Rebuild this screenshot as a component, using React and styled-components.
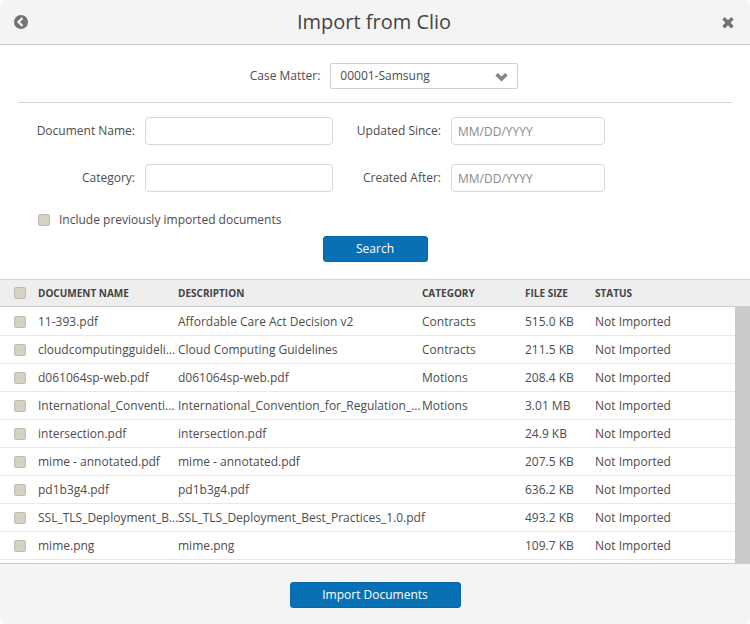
import React, {useState} from 'react';
import styled, {createGlobalStyle} from 'styled-components';

const GlobalStyle = createGlobalStyle`
 * {
     box-sizing: border-box;
 }

 body {
     margin: 0;
     background: #FFFFFF;
 }

 body, button, input, select {
     font-family: "Open Sans", "Noto Sans", sans-serif;
     font-size: 12px;
     line-height: 16px;
     color: #4D4D4D;
 }
`

const Dialog = styled.div`
 background: #FFFFFF;
 border-radius: 6px;
 overflow: hidden;
`

const Header = styled.header`
 background: #F4F4F4;
 border-bottom: 1px solid #CCCCCC;
 height: 45px;
 padding: 0 14px;
 display: flex;
 align-items: center;
 justify-content: space-between;

 & h1 {
     margin: 0;
     font-weight: 400;
     font-size: 20px;
     line-height: 28px;
     color: #444444;
 }
`

const IconButton = styled.button`
 display: flex;
 padding: 0;
 border: 0;
 background: none;
 cursor: pointer;
`

const MatterBar = styled.div`
 margin: 0 18px;
 padding: 18px 0 13px 18px;
 border-bottom: 1px solid #D3D3D3;
 display: flex;
 align-items: center;
 justify-content: center;
 gap: 10px;
`

const SelectWrap = styled.div`
 position: relative;
 width: 188px;

 & select {
     display: block;
     appearance: none;
     width: 100%;
     height: 26px;
     padding: 0 30px 0 9px;
     border: 1px solid #CFCFCF;
     border-radius: 2px;
     background: #FFFFFF;
 }

 & svg {
     position: absolute;
     right: 10px;
     top: 9px;
     pointer-events: none;
 }
`

const Filters = styled.form`
 padding: 14px 0 17px;
`

const Fields = styled.div`
 display: grid;
 grid-template-columns: 118px 188fr 98px 154fr;
 align-items: center;
 gap: 19px 10px;
 padding: 0 145px 0 17px;

 & label {
     text-align: right;
     white-space: nowrap;
 }
`

const TextInput = styled.input`
 width: 100%;
 height: 28px;
 padding: 0 6px;
 border: 1px solid #D6D6D6;
 border-radius: 4px;
 background: #FFFFFF;

 &::placeholder {
     color: #8A8A8A;
     opacity: 1;
 }
`

const Checkbox = styled.input.attrs({type: 'checkbox'})`
 appearance: none;
 flex: none;
 display: block;
 width: 12px;
 height: 12px;
 margin: 0;
 border: 1px solid #C0BDAF;
 border-radius: 2px;
 background: #D5D1C3;

 &:checked {
     background: #8C8A7E;
 }
`

const IncludeRow = styled.div`
 display: flex;
 align-items: center;
 gap: 9px;
 margin: 20px 0 8px;
 padding-left: 38px;
`

const Button = styled.button`
 display: block;
 width: ${({$wide}) => $wide ? '171px' : '105px'};
 height: 26px;
 margin: 0 auto;
 padding: 0;
 border: 1px solid #0868A8;
 border-radius: 3px;
 background: #0871B5;
 font-weight: 500;
 color: #FFFFFF;
 cursor: pointer;
`

const DocumentTable = styled.table`
 display: block;
 border-top: 1px solid #D3D3D3;
 border-bottom: 1px solid #CCCCCC;

 & tr {
     display: grid;
     grid-template-columns: 24px 140fr 244fr 103fr 70fr 140fr;
     align-items: center;
     padding-left: 14px;
 }

 & th, & td {
     min-width: 0;
     padding: 0;
     text-align: left;
     white-space: nowrap;
 }

 & thead {
     display: block;
     padding-right: 15px;
     background: #EEEEEE;
     border-bottom: 1px solid #D0D0D0;
 }

 & thead tr {
     height: 26px;
 }

 & th {
     font-weight: 700;
     font-size: 10px;
     color: #444444;
 }

 & tbody {
     display: block;
     padding: 1px 0 3px;
     border-right: 15px solid #CACACA;
 }

 & tbody tr {
     height: 28px;
     border-bottom: 1px solid #E8E8E8;
 }
`

const Footer = styled.footer`
 background: #F4F4F4;
 padding: 18px 0 16px;
`

const columns = ['DOCUMENT NAME', 'DESCRIPTION', 'CATEGORY', 'FILE SIZE', 'STATUS']

const documents = [
  {name: '11-393.pdf', description: 'Affordable Care Act Decision v2', category: 'Contracts', size: '515.0 KB'},
  {name: 'cloudcomputingguideli...', description: 'Cloud Computing Guidelines', category: 'Contracts', size: '211.5 KB'},
  {name: 'd061064sp-web.pdf', description: 'd061064sp-web.pdf', category: 'Motions', size: '208.4 KB'},
  {name: 'International_Conventi...', description: 'International_Convention_for_Regulation_...', category: 'Motions', size: '3.01 MB'},
  {name: 'intersection.pdf', description: 'intersection.pdf', category: '', size: '24.9 KB'},
  {name: 'mime - annotated.pdf', description: 'mime - annotated.pdf', category: '', size: '207.5 KB'},
  {name: 'pd1b3g4.pdf', description: 'pd1b3g4.pdf', category: '', size: '636.2 KB'},
  {name: 'SSL_TLS_Deployment_B...', description: 'SSL_TLS_Deployment_Best_Practices_1.0.pdf', category: '', size: '493.2 KB'},
  {name: 'mime.png', description: 'mime.png', category: '', size: '109.7 KB'},
]

const BackIcon = () => (
  <svg width="14" height="14" viewBox="0 0 14 14" aria-hidden="true">
    <circle cx="7" cy="7" r="7" fill="#737373"/>
    <path d="M8.5 2.9L4.5 7l4 4.1" fill="none" stroke="#F4F4F4" strokeWidth="2.2"/>
  </svg>
)

const CloseIcon = () => (
  <svg width="16" height="14" viewBox="0 0 16 14" aria-hidden="true">
    <path d="M4.8 4.5l6.4 6.4M11.2 4.5l-6.4 6.4" stroke="#737373" strokeWidth="3.6" strokeLinecap="square"/>
  </svg>
)

const ArrowIcon = () => (
  <svg width="13" height="10" viewBox="0 0 13 10" aria-hidden="true">
    <path d="M1.6 2.2l4.9 4.8 4.9-4.8" fill="none" stroke="#85857B" strokeWidth="3.6"/>
  </svg>
)

const App = () => {
  const [selected, setSelected] = useState([])

  const toggle = (name) => {
      setSelected(selected.includes(name) ? selected.filter(item => item !== name) : [...selected, name])
  }

  const toggleAll = () => {
      setSelected(selected.length === documents.length ? [] : documents.map(doc => doc.name))
  }

    return (
        <Dialog>
          <GlobalStyle/>
          <Header>
            <IconButton type="button" aria-label="Back"><BackIcon/></IconButton>
            <h1>Import from Clio</h1>
            <IconButton type="button" aria-label="Close"><CloseIcon/></IconButton>
          </Header>

          <MatterBar>
            <label htmlFor="matter">Case Matter:</label>
            <SelectWrap>
              <select id="matter">
                <option>00001-Samsung</option>
              </select>
              <ArrowIcon/>
            </SelectWrap>
          </MatterBar>

          <Filters onSubmit={(e) => e.preventDefault()}>
            <Fields>
              <label htmlFor="name">Document Name:</label>
              <TextInput id="name" type="text"/>
              <label htmlFor="updated">Updated Since:</label>
              <TextInput id="updated" type="text" placeholder="MM/DD/YYYY"/>
              <label htmlFor="category">Category:</label>
              <TextInput id="category" type="text"/>
              <label htmlFor="created">Created After:</label>
              <TextInput id="created" type="text" placeholder="MM/DD/YYYY"/>
            </Fields>
            <IncludeRow>
              <Checkbox id="include"/>
              <label htmlFor="include">Include previously imported documents</label>
            </IncludeRow>
            <Button type="submit">Search</Button>
          </Filters>

          <DocumentTable>
            <thead>
              <tr>
                <th><Checkbox aria-label="Select all" checked={selected.length === documents.length} onChange={toggleAll}/></th>
                {columns.map(column => <th key={column}>{column}</th>)}
              </tr>
            </thead>
            <tbody>
              {documents.map(doc => (
                <tr key={doc.name}>
                  <td><Checkbox aria-label={doc.name} checked={selected.includes(doc.name)} onChange={() => toggle(doc.name)}/></td>
                  <td>{doc.name}</td>
                  <td>{doc.description}</td>
                  <td>{doc.category}</td>
                  <td>{doc.size}</td>
                  <td>Not Imported</td>
                </tr>
              ))}
            </tbody>
          </DocumentTable>

          <Footer>
            <Button type="button" $wide>Import Documents</Button>
          </Footer>
        </Dialog>
    )
}

export default App
